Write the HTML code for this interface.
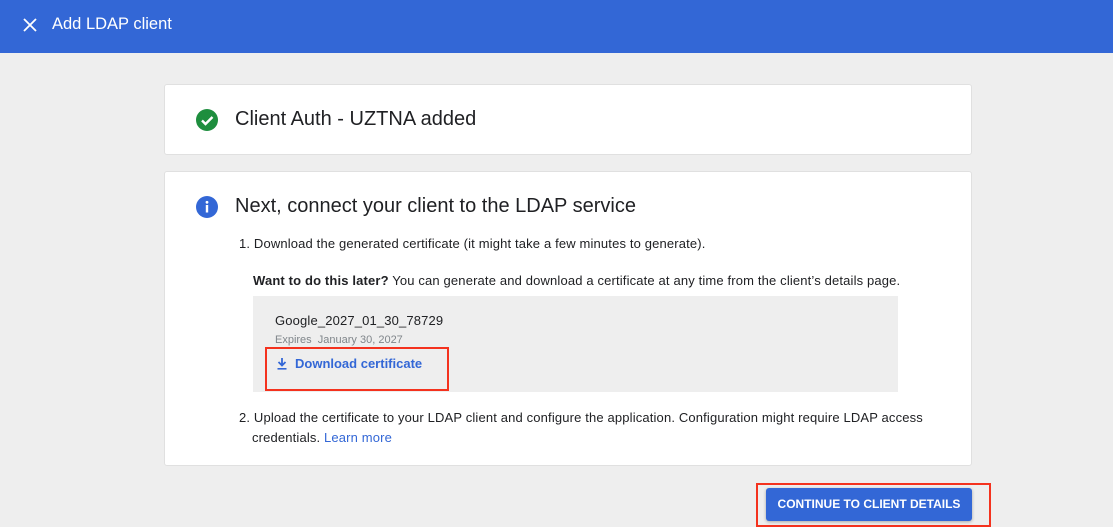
<!DOCTYPE html>
<html><head><style>
body{margin:0;width:1113px;height:527px;background:#eeeeee;font-family:"Liberation Sans",sans-serif;position:relative;overflow:hidden;color:#202124}
.hdr{position:absolute;left:0;top:0;width:1113px;height:53px;background:#3367d6;color:#fff}
.card{position:absolute;left:164px;width:808px;background:#fff;border:1px solid #e0e0e0;border-radius:3px;box-sizing:border-box}
.abs{position:absolute;white-space:nowrap}
.t{letter-spacing:0.15px}
</style></head><body>
<div class="hdr">
<svg class="abs" style="left:22px;top:17px" width="16" height="16" viewBox="0 0 16 16"><path d="M2 2L14 14M14 2L2 14" stroke="#fff" stroke-width="1.8"/></svg>
<div class="abs" style="left:52px;top:15px;font-size:16.5px">Add LDAP client</div>
</div>
<div class="card" style="top:84px;height:71px">
<svg class="abs" style="left:31px;top:24px" width="22" height="22" viewBox="0 0 22 22"><circle cx="11" cy="11" r="11" fill="#1e8e3e"/><path d="M6 11.5l3.5 3.5L16.5 8" stroke="#fff" stroke-width="2.4" fill="none"/></svg>
<div class="abs" style="left:70px;top:23px;font-size:20px">Client Auth - UZTNA added</div>
</div>
<div class="card" style="top:171px;height:295px">
<svg class="abs" style="left:31px;top:24px" width="22" height="22" viewBox="0 0 22 22"><circle cx="11" cy="11" r="11" fill="#3367d6"/><rect x="9.8" y="9" width="2.4" height="7.5" fill="#fff"/><circle cx="11" cy="6.3" r="1.4" fill="#fff"/></svg>
<div class="abs" style="left:70px;top:23px;font-size:20px">Next, connect your client to the LDAP service</div>
<div class="abs t" style="left:74px;top:64px;font-size:13px">1. Download the generated certificate (it might take a few minutes to generate).</div>
<div class="abs t" style="left:88px;top:101px;font-size:13px"><b>Want to do this later?</b> You can generate and download a certificate at any time from the client’s details page.</div>
<div class="abs" style="left:88px;top:124px;width:645px;height:96px;background:#eeeeee"></div>
<div class="abs t" style="left:110px;top:141px;font-size:13px">Google_2027_01_30_78729</div>
<div class="abs" style="left:110px;top:162px;font-size:11px;color:#80868b">Expires&nbsp; January 30, 2027</div>
<svg class="abs" style="left:112px;top:186px" width="10" height="12" viewBox="0 0 10 12"><path d="M5 0v7M1.5 4L5 7.5 8.5 4" stroke="#3367d6" stroke-width="1.8" fill="none"/><rect x="0.5" y="10" width="9" height="1.6" fill="#3367d6"/></svg>
<div class="abs" style="left:130px;top:184px;font-size:13px;color:#3367d6;font-weight:bold">Download certificate</div>
<div class="abs" style="left:100px;top:175px;width:180px;height:40px;border:2px solid #f4321e"></div>
<div class="abs t" style="left:74px;top:236px;font-size:13px;line-height:20px;white-space:normal;width:720px">2. Upload the certificate to your LDAP client and configure the application. Configuration might require LDAP access <span style="padding-left:13px">credentials.</span> <span style="color:#3367d6">Learn more</span></div>
</div>
<div class="abs" style="left:756px;top:483px;width:231px;height:40px;border:2px solid #f4321e"></div>
<div class="abs" style="left:766px;top:488px;width:206px;height:33px;background:#3367d6;border-radius:3px;box-shadow:0 1px 3px rgba(0,0,0,.3);color:#fff;font-size:12px;font-weight:bold;text-align:center;line-height:33px">CONTINUE TO CLIENT DETAILS</div>
</body></html>
